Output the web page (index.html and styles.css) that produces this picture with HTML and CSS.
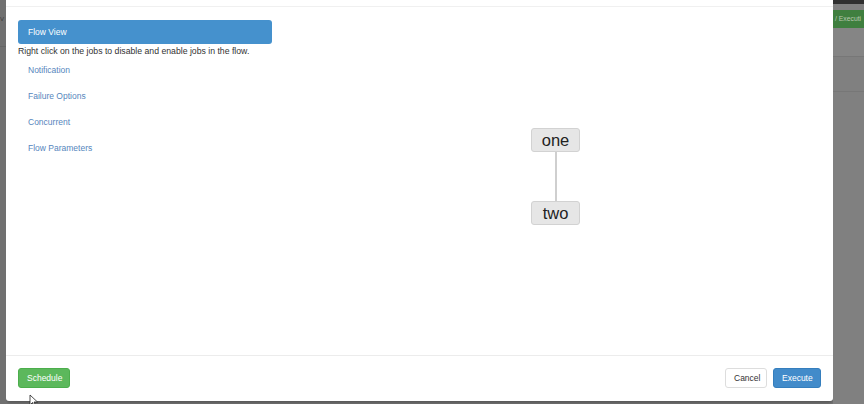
FILE: index.html
```html
<!DOCTYPE html>
<html>
<head>
<meta charset="utf-8">
<link rel="stylesheet" href="styles.css">
</head>
<body>
<div class="page">
  <div class="side side-left">
    <span class="side-letter">V</span>
    <div class="side-rule"></div>
  </div>
  <div class="modal">
    <div class="modal-top"></div>
    <div class="modal-body">
      <div class="menu">
        <div class="pill">Flow View</div>
        <p class="hint">Right click on the jobs to disable and enable jobs in the flow.</p>
        <ul class="nav">
          <li>Notification</li>
          <li>Failure Options</li>
          <li>Concurrent</li>
          <li>Flow Parameters</li>
        </ul>
      </div>
      <div class="graph">
        <div class="edge"></div>
        <div class="node node-one">one</div>
        <div class="node node-two">two</div>
      </div>
    </div>
    <div class="modal-footer">
      <button class="btn btn-green">Schedule</button>
      <div class="right-btns">
        <button class="btn btn-default">Cancel</button>
        <button class="btn btn-blue">Execute</button>
      </div>
    </div>
  </div>
  <div class="side side-right">
    <div class="dark-top"></div>
    <div class="green-bar">/ Executi</div>
    <div class="gray-row"></div>
    <div class="gray-row2"></div>
  </div>
  <svg class="cursor" width="10" height="14" viewBox="0 0 10 14"><path d="M1 1 L1 11 L3.5 8.5 L5.5 13 L7 12.3 L5 8 L8.5 8 Z" fill="#fff" stroke="#222" stroke-width="0.8"/></svg>
</div>
</body>
</html>
```
FILE: styles.css
```css
html, body {
  margin: 0;
  padding: 0;
  width: 864px;
  height: 404px;
  overflow: hidden;
  background: #7b7b7b;
  font-family: "Liberation Sans", Arial, sans-serif;
}
.page {
  position: relative;
  display: flex;
  width: 864px;
  height: 404px;
}
.side-left {
  width: 6px;
  flex-shrink: 0;
  background: #707070;
  position: relative;
  overflow: hidden;
}
.side-letter {
  display: block;
  margin-top: 16px;
  margin-left: 0;
  font-size: 6px;
  color: #3a3a3a;
}
.side-rule {
  margin-top: 24px;
  height: 1px;
  background: #666;
}
.modal {
  width: 827px;
  flex-shrink: 0;
  height: 401px;
  background: #fff;
  display: flex;
  flex-direction: column;
  border-radius: 0 0 3px 3px;
  box-shadow: 0 2px 4px rgba(0,0,0,0.35);
}
.modal-top {
  height: 6px;
  border-bottom: 1px solid #f0f0f0;
}
.modal-body {
  flex: 1;
  display: flex;
  padding: 13px 12px 0 12px;
}
.menu {
  width: 254px;
}
.pill {
  height: 24px;
  line-height: 24px;
  background: #4591cd;
  color: #fff;
  border-radius: 3px;
  padding-left: 10px;
  font-size: 8.5px;
}
.hint {
  margin: 1px 0 0 0;
  font-size: 8.7px;
  line-height: 12px;
  color: #333;
  white-space: nowrap;
}
.nav {
  list-style: none;
  margin: 0;
  padding: 0 0 0 10px;
}
.nav li {
  height: 26px;
  line-height: 26px;
  font-size: 8.5px;
  color: #5686bd;
}
.graph {
  flex: 1;
  position: relative;
}
.node {
  position: absolute;
  width: 47px;
  height: 22px;
  line-height: 22px;
  text-align: center;
  background: #e6e6e6;
  border: 1px solid #d2d2d2;
  border-radius: 3px;
  font-size: 16.5px;
  color: #222;
}
.node-one { left: 259px; top: 108px; }
.node-two { left: 259px; top: 181px; }
.edge {
  position: absolute;
  left: 283px;
  top: 132px;
  width: 2px;
  height: 50px;
  background: #cfcfcf;
}
.modal-footer {
  border-top: 1px solid #ececec;
  padding: 12px 12px 13px 12px;
  display: flex;
  justify-content: space-between;
  align-items: center;
}
.right-btns {
  display: flex;
  gap: 6px;
}
.btn {
  height: 20px;
  padding: 0 8px;
  font-family: "Liberation Sans", Arial, sans-serif;
  font-size: 8.5px;
  border-radius: 3px;
  border: 1px solid transparent;
  box-sizing: border-box;
}
.btn-green {
  background: #5cb85c;
  border-color: #4cae4c;
  color: #fff;
  width: 52px;
}
.btn-default {
  background: #fff;
  border-color: #ddd;
  color: #333;
  width: 42px;
}
.btn-blue {
  background: #428bca;
  border-color: #357ebd;
  color: #fff;
  width: 48px;
}
.side-right {
  flex: 1;
  min-width: 0;
  overflow: hidden;
  background: #808080;
  display: flex;
  flex-direction: column;
}
.dark-top {
  height: 4px;
  background: #2f2f2f;
}
.green-bar {
  margin-top: 6px;
  height: 18px;
  line-height: 18px;
  background: #3f7f3f;
  color: #b8c8b0;
  font-size: 6.8px;
  padding-left: 2px;
  white-space: nowrap;
}
.gray-row {
  height: 28px;
  background: #858585;
  border-bottom: 1px solid #777;
}
.gray-row2 {
  height: 34px;
  border-bottom: 1px solid #777;
}
.cursor {
  position: absolute;
  left: 29px;
  top: 394px;
}
```
